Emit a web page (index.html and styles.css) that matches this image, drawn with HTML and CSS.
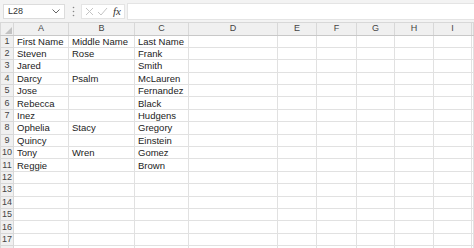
FILE: index.html
```html
<!DOCTYPE html>
<html lang="en">
<head>
    <meta charset="UTF-8">
    <title>Names - Excel</title>
    <link rel="stylesheet" href="styles.css">
</head>
<body>
    <!-- 名称框 + 编辑栏 -->
    <div class="toolbar">
        <div class="namebox">
            <span>L28</span>
            <svg class="chevron" width="8" height="5" viewBox="0 0 8 5"><path d="M0.5 0.5 L4 4 L7.5 0.5" fill="none" stroke="#666" stroke-width="1"/></svg>
        </div>
        <svg class="dots" width="3" height="11" viewBox="0 0 3 11">
            <circle cx="1.5" cy="1.5" r="0.8" fill="#888"/>
            <circle cx="1.5" cy="5.5" r="0.8" fill="#888"/>
            <circle cx="1.5" cy="9.5" r="0.8" fill="#888"/>
        </svg>
        <div class="fxbox">
            <svg width="9" height="9" viewBox="0 0 9 9"><path d="M1 1 L8 8 M8 1 L1 8" stroke="#c4c4c4" stroke-width="1"/></svg>
            <svg width="11" height="9" viewBox="0 0 11 9"><path d="M1 5 L4 8 L10 1" fill="none" stroke="#c4c4c4" stroke-width="1"/></svg>
            <span class="fx">fx</span>
        </div>
        <div class="formula"></div>
    </div>

    <table class="sheet">
        <colgroup>
            <col style="width:13px"><col style="width:55px"><col style="width:66px"><col style="width:54px"><col style="width:89px">
            <col style="width:39px"><col style="width:40px"><col style="width:38px"><col style="width:39px"><col style="width:38px"><col>
        </colgroup>
        <tr class="head">
            <th class="corner"><span class="tri"></span></th>
            <th>A</th><th>B</th><th>C</th><th>D</th><th>E</th><th>F</th><th>G</th><th>H</th><th>I</th><th></th>
        </tr>
        <tr><th>1</th><td>First Name</td><td>Middle Name</td><td>Last Name</td><td></td><td></td><td></td><td></td><td></td><td></td><td></td></tr>
        <tr><th>2</th><td>Steven</td><td>Rose</td><td>Frank</td><td></td><td></td><td></td><td></td><td></td><td></td><td></td></tr>
        <tr><th>3</th><td>Jared</td><td></td><td>Smith</td><td></td><td></td><td></td><td></td><td></td><td></td><td></td></tr>
        <tr><th>4</th><td>Darcy</td><td>Psalm</td><td>McLauren</td><td></td><td></td><td></td><td></td><td></td><td></td><td></td></tr>
        <tr><th>5</th><td>Jose</td><td></td><td>Fernandez</td><td></td><td></td><td></td><td></td><td></td><td></td><td></td></tr>
        <tr><th>6</th><td>Rebecca</td><td></td><td>Black</td><td></td><td></td><td></td><td></td><td></td><td></td><td></td></tr>
        <tr><th>7</th><td>Inez</td><td></td><td>Hudgens</td><td></td><td></td><td></td><td></td><td></td><td></td><td></td></tr>
        <tr><th>8</th><td>Ophelia</td><td>Stacy</td><td>Gregory</td><td></td><td></td><td></td><td></td><td></td><td></td><td></td></tr>
        <tr><th>9</th><td>Quincy</td><td></td><td>Einstein</td><td></td><td></td><td></td><td></td><td></td><td></td><td></td></tr>
        <tr><th>10</th><td>Tony</td><td>Wren</td><td>Gomez</td><td></td><td></td><td></td><td></td><td></td><td></td><td></td></tr>
        <tr><th>11</th><td>Reggie</td><td></td><td>Brown</td><td></td><td></td><td></td><td></td><td></td><td></td><td></td></tr>
        <tr><th>12</th><td></td><td></td><td></td><td></td><td></td><td></td><td></td><td></td><td></td><td></td></tr>
        <tr><th>13</th><td></td><td></td><td></td><td></td><td></td><td></td><td></td><td></td><td></td><td></td></tr>
        <tr><th>14</th><td></td><td></td><td></td><td></td><td></td><td></td><td></td><td></td><td></td><td></td></tr>
        <tr><th>15</th><td></td><td></td><td></td><td></td><td></td><td></td><td></td><td></td><td></td><td></td></tr>
        <tr><th>16</th><td></td><td></td><td></td><td></td><td></td><td></td><td></td><td></td><td></td><td></td></tr>
        <tr><th>17</th><td></td><td></td><td></td><td></td><td></td><td></td><td></td><td></td><td></td><td></td></tr>
        <tr><th>18</th><td></td><td></td><td></td><td></td><td></td><td></td><td></td><td></td><td></td><td></td></tr>
    </table>
</body>
</html>
```

FILE: styles.css
```css
/* 基本样式 */
body {
    font-family: 'Liberation Sans', Arial, sans-serif;
    margin: 0;
    padding: 0;
    background-color: #fff;
    color: #222;
    height: 248px;
    overflow: hidden;
}

/* 编辑栏 */
.toolbar {
    display: flex;
    align-items: center;
    height: 22px;
    padding: 0 0 0 3px;
    background-color: #f3f3f3;
    box-sizing: border-box;
}

.namebox {
    display: flex;
    align-items: center;
    justify-content: space-between;
    width: 62px;
    height: 15px;
    padding: 0 4px 0 4px;
    box-sizing: border-box;
    background-color: #fff;
    border: 1px solid #dcdcdc;
    font-size: 9px;
    color: #333;
}

.dots {
    margin: 0 6px 0 7px;
}

.fxbox {
    display: flex;
    align-items: center;
    gap: 3px;
    height: 15px;
    padding: 0 3px 0 3px;
    box-sizing: border-box;
    background-color: #fff;
    border: 1px solid #e4e4e4;
}

.fx {
    font-family: 'Liberation Serif', serif;
    font-style: italic;
    font-size: 11px;
    color: #333;
    margin-left: 2px;
}

.formula {
    flex: 1;
    height: 15px;
    margin-left: 2px;
    background-color: #fff;
    border: 1px solid #e4e4e4;
    border-right: none;
}

/* 表格 */
.sheet {
    border-collapse: collapse;
    table-layout: fixed;
    width: 100%;
    font-size: 9.5px;
}

.sheet th,
.sheet td {
    height: 11.4px;
    padding: 0;
    border: 1px solid #e1e1e1;
    white-space: nowrap;
    overflow: hidden;
    line-height: 11px;
}

.sheet td {
    padding-left: 3px;
    color: #222;
}

.sheet th {
    background-color: #f0f0f0;
    font-weight: normal;
    color: #444;
    font-size: 9px;
    border-color: #d8d8d8;
}

.sheet .head th {
    height: 11.5px;
    border-bottom: 1px solid #c8c8c8;
}

.corner {
    position: relative;
}

.tri {
    position: absolute;
    right: 1px;
    bottom: 1px;
    width: 0;
    height: 0;
    border-left: 7px solid transparent;
    border-bottom: 7px solid #c2c2c2;
}
```
